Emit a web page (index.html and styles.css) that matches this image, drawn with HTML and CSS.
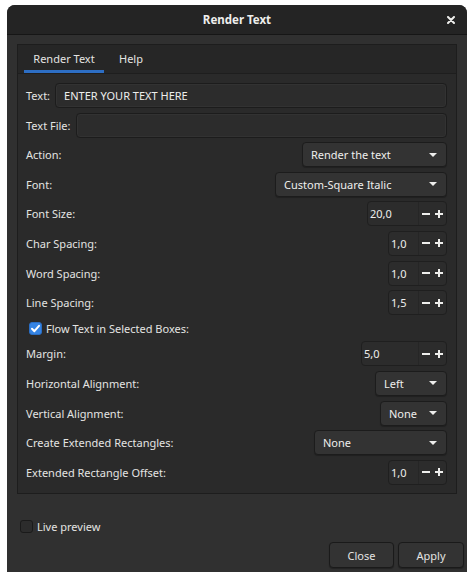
FILE: index.html
```html
<!DOCTYPE html>
<html>
<head>
<meta charset="utf-8">
<link rel="stylesheet" href="styles.css">
</head>
<body>
<div class="window">
  <div class="titlebar">
    <span class="title">Render Text</span>
    <span class="close-x">
      <svg width="8" height="8" viewBox="0 0 8 8"><path d="M1 1 L7 7 M7 1 L1 7" stroke="#eeeeec" stroke-width="2" stroke-linecap="round"/></svg>
    </span>
  </div>
  <div class="main">
    <div class="notebook">
      <div class="tabs">
        <div class="tab active">Render Text</div>
        <div class="tab help">Help</div>
      </div>
      <div class="content">
        <div class="row fill">
          <span class="label">Text:</span>
          <div class="entry">ENTER YOUR TEXT HERE</div>
        </div>
        <div class="row fill">
          <span class="label">Text File:</span>
          <div class="entry"></div>
        </div>
        <div class="row">
          <span class="label">Action:</span>
          <div class="combo w-action"><span>Render the text</span><svg class="arrow" width="8" height="4" viewBox="0 0 8 4"><path d="M0 0 H8 L4 4 Z" fill="#eeeeec"/></svg></div>
        </div>
        <div class="row">
          <span class="label">Font:</span>
          <div class="combo w-font"><span>Custom-Square Italic</span><svg class="arrow" width="8" height="4" viewBox="0 0 8 4"><path d="M0 0 H8 L4 4 Z" fill="#eeeeec"/></svg></div>
        </div>
        <div class="row">
          <span class="label">Font Size:</span>
          <div class="spin w-80"><span class="val">20,0</span><span class="btns"><svg width="10" height="10" viewBox="0 0 10 10"><path d="M1 5 H9" stroke="#eeeeec" stroke-width="2"/></svg><svg width="10" height="10" viewBox="0 0 10 10"><path d="M1 5 H9 M5 1 V9" stroke="#eeeeec" stroke-width="2"/></svg></span></div>
        </div>
        <div class="row">
          <span class="label">Char Spacing:</span>
          <div class="spin w-59"><span class="val">1,0</span><span class="btns"><svg width="10" height="10" viewBox="0 0 10 10"><path d="M1 5 H9" stroke="#eeeeec" stroke-width="2"/></svg><svg width="10" height="10" viewBox="0 0 10 10"><path d="M1 5 H9 M5 1 V9" stroke="#eeeeec" stroke-width="2"/></svg></span></div>
        </div>
        <div class="row">
          <span class="label">Word Spacing:</span>
          <div class="spin w-59"><span class="val">1,0</span><span class="btns"><svg width="10" height="10" viewBox="0 0 10 10"><path d="M1 5 H9" stroke="#eeeeec" stroke-width="2"/></svg><svg width="10" height="10" viewBox="0 0 10 10"><path d="M1 5 H9 M5 1 V9" stroke="#eeeeec" stroke-width="2"/></svg></span></div>
        </div>
        <div class="row">
          <span class="label">Line Spacing:</span>
          <div class="spin w-59"><span class="val">1,5</span><span class="btns"><svg width="10" height="10" viewBox="0 0 10 10"><path d="M1 5 H9" stroke="#eeeeec" stroke-width="2"/></svg><svg width="10" height="10" viewBox="0 0 10 10"><path d="M1 5 H9 M5 1 V9" stroke="#eeeeec" stroke-width="2"/></svg></span></div>
        </div>
        <div class="row check-row">
          <span class="check on"><svg width="11" height="11" viewBox="0 0 11 11"><path d="M2 5.8 L4.4 8.2 L9 2.8" fill="none" stroke="#ffffff" stroke-width="2" stroke-linecap="round" stroke-linejoin="round"/></svg></span>
          <span class="label">Flow Text in Selected Boxes:</span>
        </div>
        <div class="row">
          <span class="label">Margin:</span>
          <div class="spin w-86"><span class="val">5,0</span><span class="btns"><svg width="10" height="10" viewBox="0 0 10 10"><path d="M1 5 H9" stroke="#eeeeec" stroke-width="2"/></svg><svg width="10" height="10" viewBox="0 0 10 10"><path d="M1 5 H9 M5 1 V9" stroke="#eeeeec" stroke-width="2"/></svg></span></div>
        </div>
        <div class="row">
          <span class="label">Horizontal Alignment:</span>
          <div class="combo w-left"><span>Left</span><svg class="arrow" width="8" height="4" viewBox="0 0 8 4"><path d="M0 0 H8 L4 4 Z" fill="#eeeeec"/></svg></div>
        </div>
        <div class="row">
          <span class="label">Vertical Alignment:</span>
          <div class="combo w-none"><span>None</span><svg class="arrow" width="8" height="4" viewBox="0 0 8 4"><path d="M0 0 H8 L4 4 Z" fill="#eeeeec"/></svg></div>
        </div>
        <div class="row">
          <span class="label">Create Extended Rectangles:</span>
          <div class="combo w-wide"><span>None</span><svg class="arrow" width="8" height="4" viewBox="0 0 8 4"><path d="M0 0 H8 L4 4 Z" fill="#eeeeec"/></svg></div>
        </div>
        <div class="row">
          <span class="label">Extended Rectangle Offset:</span>
          <div class="spin w-59"><span class="val">1,0</span><span class="btns"><svg width="10" height="10" viewBox="0 0 10 10"><path d="M1 5 H9" stroke="#eeeeec" stroke-width="2"/></svg><svg width="10" height="10" viewBox="0 0 10 10"><path d="M1 5 H9 M5 1 V9" stroke="#eeeeec" stroke-width="2"/></svg></span></div>
        </div>
      </div>
    </div>
    <div class="live">
      <span class="check"></span>
      <span class="label">Live preview</span>
    </div>
    <div class="actions">
      <div class="button">Close</div>
      <div class="button">Apply</div>
    </div>
  </div>
</div>
</body>
</html>
```

FILE: styles.css
```css
* { box-sizing: border-box; }
html, body { margin: 0; padding: 0; background: #ffffff; }
body {
  font-family: "Noto Sans", "Open Sans", sans-serif;
  font-size: 11px;
  color: #e4e4e2;
}
.window {
  margin: 5px 0 0 7px;
  width: 460px;
  height: 567px;
  background: #303030;
  border-radius: 8px 8px 0 0;
  overflow: hidden;
  display: flex;
  flex-direction: column;
}
.titlebar {
  height: 30px;
  flex: 0 0 30px;
  background: #242424;
  border-bottom: 1px solid #161616;
  display: flex;
  align-items: center;
  justify-content: center;
  position: relative;
}
.title {
  font-weight: bold;
  font-size: 11.5px;
  color: #eeeeec;
}
.close-x {
  position: absolute;
  right: 12px;
  top: 11px;
  display: flex;
}
.main {
  flex: 1;
  padding: 9px 10px 0 10px;
  display: flex;
  flex-direction: column;
}
.notebook {
  height: 450px;
  border: 1px solid #1d1d1d;
  background: #2a2a2a;
  display: flex;
  flex-direction: column;
}
.tabs {
  height: 29px;
  flex: 0 0 29px;
  background: #262626;
  border-bottom: 1px solid #1e1e1e;
  display: flex;
  padding-left: 6px;
}
.tab {
  display: flex;
  align-items: center;
  justify-content: center;
  color: #e4e4e2;
  border-bottom: 3px solid transparent;
  padding-top: 2px;
}
.tab.active {
  width: 80px;
  border-bottom-color: #2d6ec4;
}
.tab.help {
  padding-left: 15px;
  padding-right: 10px;
}
.content {
  flex: 1;
  padding: 9px 9px 0 8px;
  display: flex;
  flex-direction: column;
  gap: 4.6px;
}
.row {
  height: 25px;
  flex: 0 0 25px;
  display: flex;
  align-items: center;
  justify-content: space-between;
}
.row.fill {
  justify-content: flex-start;
  gap: 5px;
}
.label { white-space: nowrap; }
.entry {
  flex: 1;
  height: 25px;
  background: #2c2c2c;
  border: 1px solid #1c1c1c;
  border-radius: 4px;
  box-shadow: inset 0 0 0 1px #323232;
  display: flex;
  align-items: center;
  padding-left: 8px;
  color: #eeeeec;
}
.combo {
  height: 25px;
  background: #333333;
  border: 1px solid #1c1c1c;
  border-radius: 4px;
  box-shadow: 0 1px 1px rgba(0,0,0,0.25);
  display: flex;
  align-items: center;
  justify-content: space-between;
  padding: 0 9px 0 8px;
  color: #eeeeec;
}
.arrow { flex: 0 0 auto; }
.w-action { width: 145px; }
.w-font { width: 172px; }
.w-left { width: 72px; }
.w-none { width: 67px; }
.w-wide { width: 133px; }
.spin {
  height: 25px;
  background: #2c2c2c;
  border: 1px solid #1f1f1f;
  border-radius: 4px;
  display: flex;
  align-items: center;
  color: #eeeeec;
}
.spin .val {
  flex: 1;
  padding-left: 2px;
}
.spin .btns {
  height: 100%;
  display: flex;
  align-items: center;
  gap: 3px;
  padding: 0 2px 0 2px;
  border-left: 1px solid #262626;
}
.w-80 { width: 80px; }
.w-59 { width: 59px; }
.w-86 { width: 86px; }
.row.check-row {
  height: 17px;
  flex: 0 0 17px;
  justify-content: flex-start;
  gap: 4px;
  padding-left: 3px;
}
.check {
  width: 13px;
  height: 13px;
  border-radius: 3px;
  background: #2c2c2c;
  border: 1px solid #1a1a1a;
  display: flex;
  align-items: center;
  justify-content: center;
  flex: 0 0 13px;
}
.check.on {
  background: #3584e4;
  border-color: #2a6ec4;
}
.live {
  display: flex;
  align-items: center;
  gap: 4px;
  margin-top: 24px;
  padding-left: 3px;
  height: 16px;
}
.actions {
  margin-top: 8px;
  display: flex;
  justify-content: flex-end;
  gap: 4px;
  margin-right: -7px;
}
.button {
  height: 26px;
  width: 65px;
  background: #333333;
  border: 1px solid #1a1a1a;
  border-radius: 4px;
  box-shadow: 0 1px 1px rgba(0,0,0,0.3);
  display: flex;
  align-items: center;
  justify-content: center;
  color: #e4e4e2;
}
.button + .button { width: 66px; }
```
